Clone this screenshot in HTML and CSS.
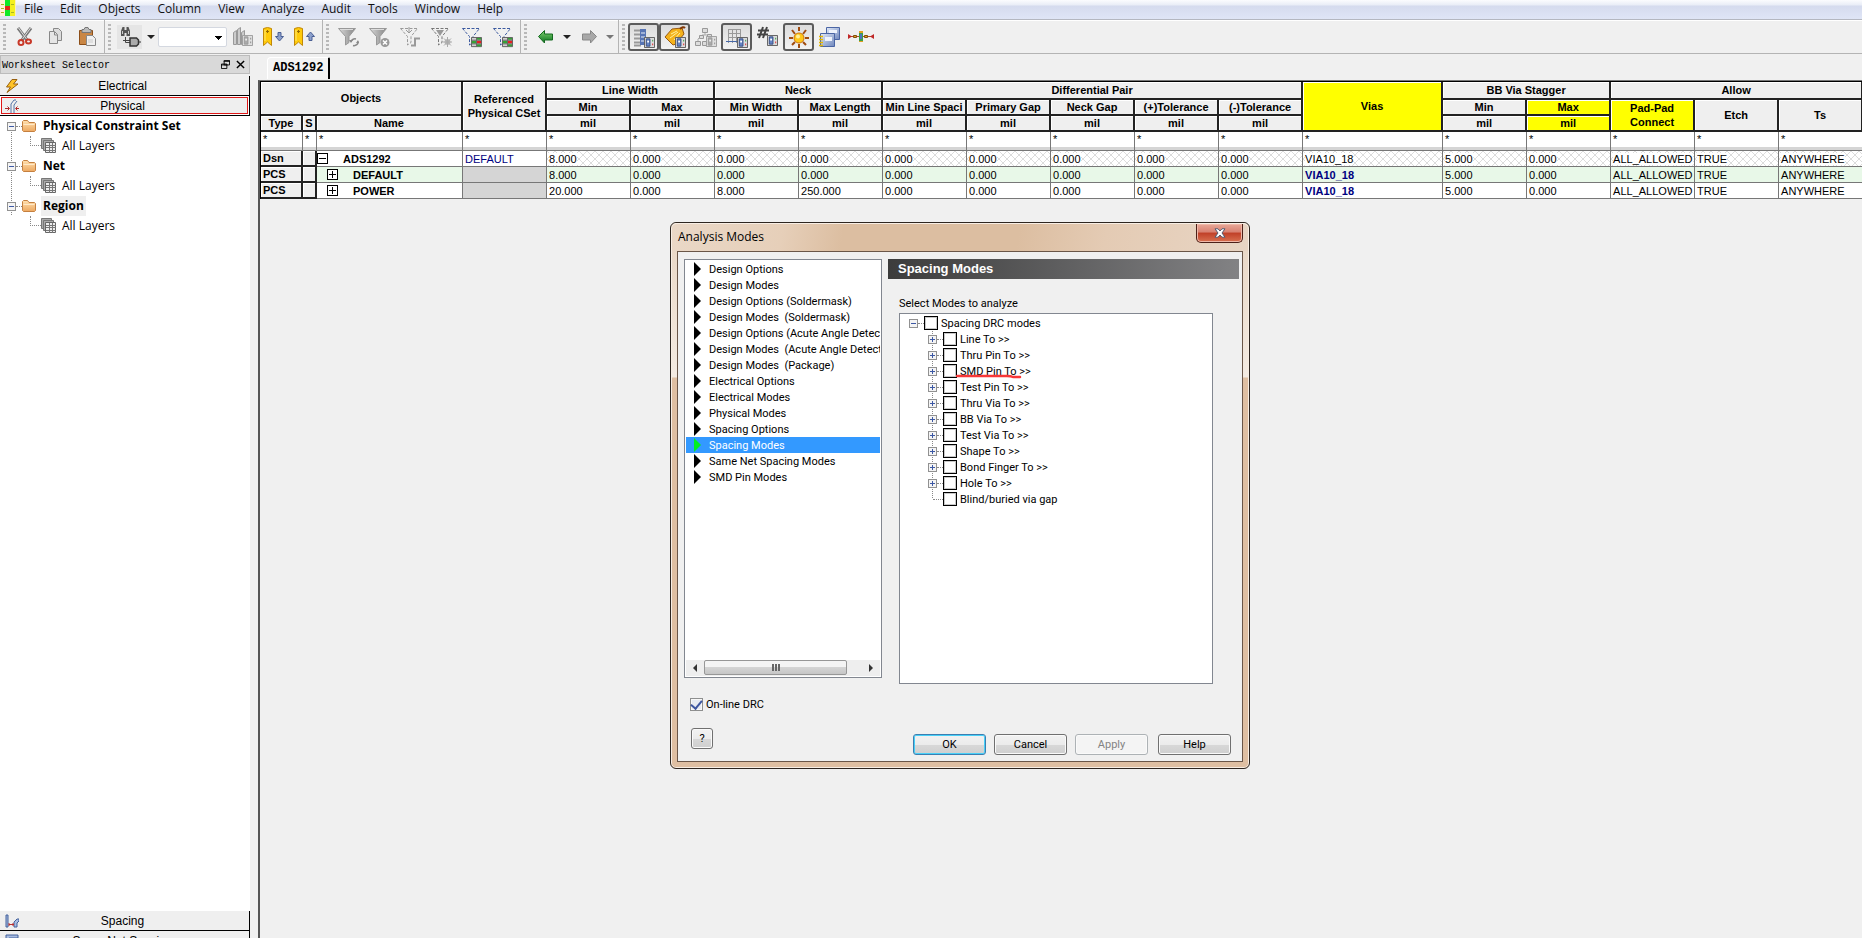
FILE: index.html
```html
<!DOCTYPE html>
<html lang="en">
<head>
    <meta charset="UTF-8">
    <meta name="viewport" content="width=device-width, initial-scale=1.0">
    <title>Constraint Manager</title>
    <link rel="stylesheet" href="styles.css">
</head>
<body>
    <!-- Shared icons -->
    <svg class="sprite" aria-hidden="true">
        <defs>
            <linearGradient id="gFunnel" x1="0" x2="1"><stop offset="0" stop-color="#d8d8d8"/><stop offset="1" stop-color="#868686"/></linearGradient>
            <linearGradient id="gFolder" x1="0" y1="0" x2="0" y2="1"><stop offset="0" stop-color="#ffe0b0"/><stop offset="1" stop-color="#eda860"/></linearGradient>
            <linearGradient id="gGreen" x1="0" y1="0" x2="0" y2="1"><stop offset="0" stop-color="#7fd070"/><stop offset="1" stop-color="#0c7420"/></linearGradient>
            <linearGradient id="gBlue" x1="0" y1="0" x2="1" y2="1"><stop offset="0" stop-color="#e2eaf8"/><stop offset="1" stop-color="#6f87bd"/></linearGradient>
        </defs>
        <symbol id="folder" viewBox="0 0 14 12">
            <path d="M.5 10.5v-9l1-1h4l1.500 2h5.500l1 1v7l-1 1h-11z" fill="url(#gFolder)" stroke="#c58040"/>
            <path d="M1.500 4.500h11" stroke="#ffe9c8"/>
        </symbol>
        <symbol id="layers" viewBox="0 0 16 16">
            <path d="M.5.5h10v10H.5z" fill="#aaa" stroke="#777"/>
            <path d="M2.500 2.500h10v10h-10z" fill="#aaa" stroke="#777"/>
            <path d="M4.500 4.500h10v10h-10z" fill="#eee" stroke="#666"/>
            <path d="M5 7.500h10M5 9.500h10M5 12.500h10M8.500 5v10M11.500 5v10" stroke="#777"/>
        </symbol>
        <symbol id="funnel" viewBox="0 0 22 22">
            <path d="M1.500 2.500h17l-6.500 8v6l-3.500 2.500v-8.500z" fill="url(#gFunnel)" stroke="#999"/>
            <path d="M3 3.500h13" stroke="#ddd"/>
        </symbol>
        <symbol id="funnel-dash" viewBox="0 0 22 22">
            <path d="M1.500 2.500h17l-6.500 8v6l-3.500 2.500v-8.500z" fill="none" stroke="currentColor" stroke-dasharray="3 1.500"/>
        </symbol>
        <symbol id="cellgrid" viewBox="0 0 12 12">
            <path d="M.5.5h11v10H.5z" fill="#d0d0d0" stroke="#555"/>
            <path d="M6 1h5v2H6zM1 4h5v3H1zM6 8h5v2H6z" fill="#35a035"/>
            <path d="M6 4h5v3H6z" fill="#e82020"/>
            <path d="M1 3.500h10M1 7.500h10M6 1v9" stroke="#666"/>
        </symbol>
        <symbol id="panel" viewBox="0 0 12 12">
            <path d="M.5.5h11v11H.5z" fill="#ddd" stroke="#555"/>
            <path d="M2.500 2h4v8h-4z" fill="#6584c4" stroke="#334a80"/>
            <path d="M3.500 4h2v2h-2z" fill="#fff"/>
            <path d="M9 3h1v2H9z" fill="#2c9a38"/><path d="M9 7h1v2H9z" fill="#e02020"/>
        </symbol>
        <symbol id="panel-off" viewBox="0 0 12 12">
            <path d="M.5.5h11v11H.5z" fill="#e0e0e0" stroke="#999"/>
            <path d="M2.500 2h4v8h-4z" fill="#aaa" stroke="#999"/>
            <path d="M3.500 4h2v2h-2z" fill="#eee"/><path d="M9 3h1v2H9zM9 7h1v2H9z" fill="#888"/>
        </symbol>
        <symbol id="bookmark" viewBox="0 0 10 20">
            <path d="M.5 1.500q4-2 8 0v17l-4-3.500-4 3.500z" fill="#ffca0a" stroke="#c08808"/>
            <path d="M4 3h1v3H4zM3 4h3v1H3z" fill="#966a00"/><path d="M2 3v11" stroke="#ffe870"/>
        </symbol>
    </svg>

    <nav class="menubar">
        <svg class="app-icon" viewBox="0 0 16 16" aria-hidden="true">
            <rect width="16" height="16" fill="#f8f0c0"/><rect width="5" height="16" fill="#fff0d8"/>
            <rect x="5" width="5" height="16" fill="#10e828"/><rect x="5" y="6" width="5" height="4" fill="#e02818"/>
            <rect x="10" width="5" height="16" fill="#f4f020"/><path d="M1 4.500h3M1 8.500h3M1 12.500h3M11 4.500h3M11 12.500h3" stroke="#a8b820"/>
        </svg>
        <a href="#file">File</a>
        <a href="#edit">Edit</a>
        <a href="#objects">Objects</a>
        <a href="#column">Column</a>
        <a href="#view">View</a>
        <a href="#analyze">Analyze</a>
        <a href="#audit">Audit</a>
        <a href="#tools">Tools</a>
        <a href="#window">Window</a>
        <a href="#help">Help</a>
    </nav>

    <div class="toolbar">
        <div class="tool-group">
            <span class="grip"></span>
            <button class="tool" aria-label="Cut"><svg viewBox="0 0 22 22">
                <path d="M4 2l9 12M17 2L8 14" stroke="#777" stroke-width="3"/><path d="M4.500 2l8 11M16.500 2l-8 11" stroke="#ddd"/>
                <ellipse cx="7" cy="16.500" rx="2.500" ry="2.500" fill="none" stroke="#c83828" stroke-width="2"/><ellipse cx="14.500" cy="15.500" rx="2.500" ry="2" fill="none" stroke="#c83828" stroke-width="2"/>
            </svg></button>
            <button class="tool" aria-label="Copy"><svg viewBox="0 0 22 22">
                <path d="M8.500 2.500h5l3 3v9h-8z" fill="#ddd" stroke="#888"/><path d="M4.500 5.500h5l3 3v9h-8z" fill="#e6e6e6" stroke="#888"/><path d="M9.500 6v3h3" fill="none" stroke="#888"/>
            </svg></button>
            <button class="tool" aria-label="Paste"><svg viewBox="0 0 22 22">
                <path d="M3.500 4.500h13v14h-13z" fill="#c98644" stroke="#8c4e18"/><path d="M6 3.500h2l1-2h3l1 2h2v3H6z" fill="#bbb" stroke="#777"/><path d="M10.500 9.500h6l3 3v7h-9z" fill="#f0f0f0" stroke="#888"/><path d="M12 14h5M12 16h5" stroke="#ccc"/>
            </svg></button>
        </div>
        <div class="tool-group">
            <span class="grip"></span>
            <button class="tool shaded" aria-label="Find"><svg viewBox="0 0 22 22">
                <path d="M2 10V5l1.500-4h2V10zM11 10V5L9.500 1h-2V10z" fill="#555"/><path d="M5 4h3v3H5z" fill="#555"/><path d="M3.500 5v3M9.500 5v3" stroke="#ccc"/>
                <path d="M6.500 11v5.500H11" fill="none" stroke="#444"/><path d="M4 14.500h7" stroke="#444"/>
                <path d="M11 12h6.500l2 2v4l-2 2H11z" fill="#aaa" stroke="#333" stroke-width="1.500"/><path d="M20 16h2" stroke="#333"/>
            </svg></button>
            <button class="drop" aria-label="Find options"></button>
            <select class="find-box" aria-label="Find text"><option></option></select>
            <button class="tool" aria-label="Find next"><svg viewBox="0 0 22 22">
                <path d="M1.500 6.500l3-2v14h-3zM5.500 3.500l3-2v17h-3zM9.500 6.500l3-2v14h-3z" fill="#ccc" stroke="#999"/><use href="#panel-off" x="10" y="9" width="11" height="11"/>
            </svg></button>
            <button class="tool" aria-label="Next bookmark"><svg viewBox="0 0 22 22">
                <use href="#bookmark" x="0" y="1" width="10" height="20"/><path d="M15 6.500h3v4h2.500l-4 4.500-4-4.500H15z" fill="#8ca0cc" stroke="#4a5f94"/>
            </svg></button>
            <button class="tool" aria-label="Previous bookmark"><svg viewBox="0 0 22 22">
                <use href="#bookmark" x="0" y="1" width="10" height="20"/><path d="M15 14.500h3v-4h2.500l-4-4.500-4 4.500H15z" fill="#8ca0cc" stroke="#4a5f94"/>
            </svg></button>
        </div>
        <div class="tool-group">
            <span class="grip"></span>
            <button class="tool" aria-label="Refresh filter"><svg viewBox="0 0 22 22"><use href="#funnel"/><path d="M14 16a4 3.500 0 0 1 5-3m2 2.500a4 3.500 0 0 1-5 4" fill="none" stroke="#888" stroke-width="1.500"/><path d="M12 14h4l-2 3zM22 17h-3l2-3z" fill="#888"/></svg></button>
            <button class="tool" aria-label="Clear filter"><svg viewBox="0 0 22 22"><use href="#funnel"/><circle cx="17" cy="16.500" r="4.500" fill="#999"/><path d="M15 14.500l4 4M19 14.500l-4 4" stroke="#fff" stroke-width="1.500"/></svg></button>
            <button class="tool" aria-label="Signal filter"><svg viewBox="0 0 22 22"><use href="#funnel-dash" color="#999"/><path d="M10 1v6M7 4l3 3 3-3" fill="none" stroke="#999"/><path d="M12 19.500h4v-7h5" fill="none" stroke="#999" stroke-width="2"/></svg></button>
            <button class="tool" aria-label="Custom filter"><svg viewBox="0 0 22 22"><use href="#funnel-dash" color="#777"/><path d="M6 4h8l-4 6z" fill="#999"/><circle cx="17.500" cy="16" r="3" fill="#bbb"/><path d="M17.500 11v10M12.500 16h10M14 12.500l7 7M21 12.500l-7 7" stroke="#aaa"/></svg></button>
            <button class="tool" aria-label="Filter rows"><svg viewBox="0 0 22 22"><use href="#funnel-dash" color="#3c5aa0"/><use href="#cellgrid" x="10" y="11" width="11" height="11"/></svg></button>
            <button class="tool" aria-label="Filter columns"><svg viewBox="0 0 22 22"><use href="#funnel-dash" color="#3c5aa0"/><use href="#cellgrid" x="10" y="11" width="11" height="11"/></svg></button>
        </div>
        <div class="tool-group">
            <span class="grip"></span>
            <button class="tool" aria-label="Back"><svg viewBox="0 0 22 22"><path d="M3.500 10.500l6-6v3.500h8v6h-8v3z" fill="url(#gGreen)" stroke="#156a20"/></svg></button>
            <button class="drop" aria-label="Back history"></button>
            <button class="tool" aria-label="Forward"><svg viewBox="0 0 22 22"><path d="M18.500 10.500l-6-6v3.500h-8v6h8v3z" fill="#a8a8a8" stroke="#888"/></svg></button>
            <button class="drop faded" aria-label="Forward history"></button>
        </div>
        <div class="tool-group">
            <span class="grip"></span>
            <button class="tool pressed" aria-label="Worksheet selector"><svg viewBox="0 0 22 22">
                <path d="M1 4.500h7M1 8.500h7M1 12.500h7M1 16.500h7M1 19.500h7" stroke="#999" stroke-width="2"/><path d="M7 3h6v16H7z" fill="#5774b4"/><path d="M8 7h4M8 11h4M8 15h4" stroke="#e8eef8"/><use href="#panel" x="11" y="11" width="11" height="11"/>
            </svg></button>
            <button class="tool pressed" aria-label="Tags"><svg viewBox="0 0 22 22">
                <path d="M1 11l7-8 10-1 2 6-8 10-3 1z" fill="#f4b21c" stroke="#9a5a10"/><path d="M7 8l6-3M6 12l8-6M10 14l6-7" stroke="#fff2a0"/><path d="M16 3q3-3 5-1" fill="none" stroke="#803808" stroke-width="2"/><use href="#panel" x="11" y="11" width="11" height="11"/>
            </svg></button>
            <button class="tool" aria-label="Hierarchy"><svg viewBox="0 0 22 22">
                <path d="M10 5v4M3 15v-2l4-4h6l4 4" fill="none" stroke="#aaa"/><path d="M7.500 2.500h5v4h-5zM4.500 9.500h4v3h-4zM.5 15.500h5v4h-5zM7.500 15.500h4v4h-4zM12.500 8.500h4v3h-4z" fill="#ddd" stroke="#999"/><use href="#panel-off" x="11" y="10" width="11" height="11"/>
            </svg></button>
            <button class="tool pressed" aria-label="Grid"><svg viewBox="0 0 22 22">
                <path d="M2.500 3v14M6.500 3v14M10.500 3v14M14.500 3v14M2 3.500h13M2 7.500h13M2 11.500h13" fill="none" stroke="#999"/><path d="M0 15.500h13" stroke="#4668a8"/><use href="#panel" x="11" y="11" width="11" height="11"/>
            </svg></button>
            <button class="tool" aria-label="Row numbers"><svg viewBox="0 0 22 22">
                <path d="M6 1L2 12M10 1L6 12M1 4.500h11M0 8.500h11" stroke="#444" stroke-width="2"/><use href="#panel" x="10" y="9" width="11" height="11"/>
            </svg></button>
            <button class="tool pressed" aria-label="Highlight"><svg viewBox="0 0 22 22">
                <path d="M11 1v4M11 18v4M1 12h4M17 12h4M4 4l3 4M18 4l-3 4M4 19l3-3M18 19l-3-3" stroke="#a04c10" stroke-width="2"/><circle cx="11" cy="12" r="5" fill="#ffc81c" stroke="#d07808"/><circle cx="10" cy="10.500" r="2" fill="#fff09a"/>
            </svg></button>
            <button class="tool" aria-label="Cascade windows"><svg viewBox="0 0 22 22">
                <path d="M7.500 1.500h13v12h-13z" fill="url(#gBlue)" stroke="#4a65a4"/><path d="M10 4h8v3h-8z" fill="#eef3fc"/><path d="M1.500 7.500h14v13h-14z" fill="url(#gBlue)" stroke="#4a65a4"/><path d="M6 11h7v4H6z" fill="#eef3fc"/><path d="M0 10.500h4M0 13.500h4M0 16.500h4M0 19.500h4" stroke="#e8b800" stroke-width="1.500"/>
            </svg></button>
            <button class="tool" aria-label="Net"><svg class="wide" viewBox="0 0 26 22">
                <path d="M1 10.500h24" stroke="#b04828"/><path d="M0 8l4 2.500L0 13zM26 8l-4 2.500 4 2.500z" fill="#c02828"/><path d="M5.500 9.500h3v2h-3zM16.500 9.500h3v2h-3z" fill="#e8a020" stroke="#805010"/><path d="M11 6h4v9h-4z" fill="#38a048"/><path d="M12 8h2v5h-2z" fill="#4c74c0"/><path d="M11 5h4v2h-4zM11 15h4v1h-4z" fill="#e0a020"/>
            </svg></button>
        </div>
    </div>

    <div class="workspace">
        <aside class="sidebar">
            <div class="pane-title">
                <span>Worksheet Selector</span>
                <button aria-label="Float"><svg viewBox="0 0 10 10"><path d="M3.500.5h6v5h-6zM.5 4.500h6v5h-6z" fill="#d9d9d9" stroke="#000"/><path d="M3 1.500h7M0 5.500h7" stroke="#000"/></svg></button>
                <button aria-label="Close pane"><svg viewBox="0 0 10 10"><path d="M1 1l8 8M9 1L1 9" stroke="#000" stroke-width="1.600"/></svg></button>
            </div>
            <button class="sheet-tab">
                <svg viewBox="0 0 14 14"><path d="M7 .5h5L8.500 5H13L2 13.500 5.500 8H1.500z" fill="#ffc428" stroke="#986010"/></svg>
                <span>Electrical</span>
            </button>
            <button class="sheet-tab active">
                <svg viewBox="0 0 14 14"><path d="M6 14V5l3-4h2M9 14V6l3-4" fill="none" stroke="#5274a8"/><path d="M0 9.500h4M14 9.500h-3M2.500 7.500l2 2-2 2M12.500 7.500l-2 2 2 2" fill="none" stroke="#b02828"/></svg>
                <span>Physical</span>
            </button>
            <ul class="sheet-tree">
                <li class="branch"><button class="toggle minus" aria-label="Collapse"></button><i class="dots"></i><svg><use href="#folder"/></svg><b>Physical Constraint Set</b></li>
                <li class="leaf"><i class="elbow"></i><svg><use href="#layers"/></svg><span>All Layers</span></li>
                <li class="branch"><button class="toggle minus" aria-label="Collapse"></button><i class="dots"></i><svg><use href="#folder"/></svg><b>Net</b></li>
                <li class="leaf"><i class="elbow"></i><svg><use href="#layers"/></svg><span>All Layers</span></li>
                <li class="branch"><button class="toggle minus" aria-label="Collapse"></button><i class="dots"></i><svg><use href="#folder"/></svg><b class="current">Region</b></li>
                <li class="leaf"><i class="elbow"></i><svg><use href="#layers"/></svg><span>All Layers</span></li>
            </ul>
            <div class="more-tabs">
                <button class="sheet-tab">
                    <svg viewBox="0 0 14 14"><path d="M1 1h2v12H1zM9 13V8l3-3h2v2l-2 2v4z" fill="#a8bce0" stroke="#42609c"/><path d="M4 10.500h5M4 9v3M8 9v3" stroke="#b83030"/></svg>
                    <span>Spacing</span>
                </button>
                <button class="sheet-tab">
                    <svg viewBox="0 0 14 14"><path d="M1 13V1h12v3H4v9z" fill="#a8bce0" stroke="#42609c"/><path d="M7 6h6v7H7z" fill="#a8bce0" stroke="#42609c"/></svg>
                    <span>Same Net Spacing</span>
                </button>
            </div>
        </aside>

        <main class="sheet">
            <button class="doc-tab">ADS1292</button>
            <div class="sheet-body">
                <table class="constraints">
                    <colgroup>
                        <col class="c-type"><col class="c-s"><col class="c-name"><col class="c-std">
                        <col class="c-std"><col class="c-std"><col class="c-std"><col class="c-std">
                        <col class="c-std"><col class="c-std"><col class="c-std"><col class="c-std"><col class="c-std">
                        <col class="c-vias">
                        <col class="c-std"><col class="c-std"><col class="c-std"><col class="c-std"><col class="c-std">
                    </colgroup>
                    <thead>
                        <tr class="head-top">
                            <th colspan="3" rowspan="2">Objects</th>
                            <th rowspan="3">Referenced Physical CSet</th>
                            <th colspan="2">Line Width</th>
                            <th colspan="2">Neck</th>
                            <th colspan="5">Differential Pair</th>
                            <th rowspan="3" class="mark">Vias</th>
                            <th colspan="2">BB Via Stagger</th>
                            <th colspan="3">Allow</th>
                        </tr>
                        <tr>
                            <th>Min</th><th>Max</th>
                            <th>Min Width</th><th>Max Length</th>
                            <th>Min Line Spaci</th><th>Primary Gap</th><th>Neck Gap</th><th>(+)Tolerance</th><th>(-)Tolerance</th>
                            <th>Min</th><th class="mark">Max</th>
                            <th rowspan="2" class="mark">Pad-Pad Connect</th><th rowspan="2">Etch</th><th rowspan="2">Ts</th>
                        </tr>
                        <tr>
                            <th>Type</th><th>S</th><th>Name</th>
                            <th>mil</th><th>mil</th><th>mil</th><th>mil</th>
                            <th>mil</th><th>mil</th><th>mil</th><th>mil</th><th>mil</th>
                            <th>mil</th><th class="mark">mil</th>
                        </tr>
                    </thead>
                    <tbody>
                        <tr class="filters">
                            <td>*</td><td>*</td><td>*</td><td>*</td><td>*</td><td>*</td><td>*</td><td>*</td><td>*</td><td>*</td>
                            <td>*</td><td>*</td><td>*</td><td>*</td><td>*</td><td>*</td><td>*</td><td>*</td><td>*</td>
                        </tr>
                        <tr class="design">
                            <th>Dsn</th><th></th>
                            <td class="name"><div><button class="expand minus" aria-label="Collapse"></button>ADS1292</div></td>
                            <td class="cset">DEFAULT</td>
                            <td><span>8.000</span></td><td><span>0.000</span></td><td><span>0.000</span></td><td><span>0.000</span></td>
                            <td><span>0.000</span></td><td><span>0.000</span></td><td><span>0.000</span></td><td><span>0.000</span></td><td><span>0.000</span></td>
                            <td><span>VIA10_18</span></td>
                            <td><span>5.000</span></td><td><span>0.000</span></td><td><span>ALL_ALLOWED</span></td><td><span>TRUE</span></td><td><span>ANYWHERE</span></td>
                        </tr>
                        <tr class="default-set">
                            <th>PCS</th><th></th>
                            <td class="name child"><div><button class="expand" aria-label="Expand"></button>DEFAULT</div></td>
                            <td class="blank"></td>
                            <td>8.000</td><td>0.000</td><td>0.000</td><td>0.000</td>
                            <td>0.000</td><td>0.000</td><td>0.000</td><td>0.000</td><td>0.000</td>
                            <td class="via">VIA10_18</td>
                            <td>5.000</td><td>0.000</td><td>ALL_ALLOWED</td><td>TRUE</td><td>ANYWHERE</td>
                        </tr>
                        <tr>
                            <th>PCS</th><th></th>
                            <td class="name child"><div><button class="expand" aria-label="Expand"></button>POWER</div></td>
                            <td class="blank"></td>
                            <td>20.000</td><td>0.000</td><td>8.000</td><td>250.000</td>
                            <td>0.000</td><td>0.000</td><td>0.000</td><td>0.000</td><td>0.000</td>
                            <td class="via">VIA10_18</td>
                            <td>5.000</td><td>0.000</td><td>ALL_ALLOWED</td><td>TRUE</td><td>ANYWHERE</td>
                        </tr>
                    </tbody>
                </table>
            </div>
        </main>
    </div>

    <!-- Analysis Modes window -->
    <section class="dialog" role="dialog" aria-labelledby="dialogTitle">
        <header class="dialog-title">
            <h2 id="dialogTitle">Analysis Modes</h2>
            <button class="close" aria-label="Close"><svg viewBox="0 0 12 10"><path d="M1 .8h3l2 2.200L8 .8h3L8 5l3 4.200H8L6 7 4 9.200H1L4 5z" fill="#fff" stroke="#555a70"/></svg></button>
        </header>
        <div class="dialog-body">
            <div class="columns">
                <div class="mode-list">
                    <ul>
                        <li>Design Options</li>
                        <li>Design Modes</li>
                        <li>Design Options (Soldermask)</li>
                        <li>Design Modes&nbsp; (Soldermask)</li>
                        <li>Design Options (Acute Angle Detect</li>
                        <li>Design Modes&nbsp; (Acute Angle Detect</li>
                        <li>Design Modes&nbsp; (Package)</li>
                        <li>Electrical Options</li>
                        <li>Electrical Modes</li>
                        <li>Physical Modes</li>
                        <li>Spacing Options</li>
                        <li class="selected">Spacing Modes</li>
                        <li>Same Net Spacing Modes</li>
                        <li>SMD Pin Modes</li>
                    </ul>
                    <div class="scrollbar">
                        <button class="scroll-left" aria-label="Scroll left"></button>
                        <div class="thumb"><i></i><i></i><i></i></div>
                        <button class="scroll-right" aria-label="Scroll right"></button>
                    </div>
                </div>
                <div class="mode-panel">
                    <h3>Spacing Modes</h3>
                    <p>Select Modes to analyze</p>
                    <ul class="mode-tree">
                        <li class="root"><button class="toggle minus" aria-label="Collapse"></button><i class="dots"></i><label><input type="checkbox">Spacing DRC modes</label></li>
                        <li><button class="toggle" aria-label="Expand"></button><i class="dots"></i><label><input type="checkbox">Line To &gt;&gt;</label></li>
                        <li><button class="toggle" aria-label="Expand"></button><i class="dots"></i><label><input type="checkbox">Thru Pin To &gt;&gt;</label></li>
                        <li><button class="toggle" aria-label="Expand"></button><i class="dots"></i><label><input type="checkbox">SMD Pin To &gt;&gt;</label>
                            <svg class="red-line" viewBox="0 0 66 5" aria-hidden="true"><path d="M1 2h50q4 0 6 1h7" fill="none" stroke="#f83838" stroke-width="2.500" stroke-linecap="round"/></svg></li>
                        <li><button class="toggle" aria-label="Expand"></button><i class="dots"></i><label><input type="checkbox">Test Pin To &gt;&gt;</label></li>
                        <li><button class="toggle" aria-label="Expand"></button><i class="dots"></i><label><input type="checkbox">Thru Via To &gt;&gt;</label></li>
                        <li><button class="toggle" aria-label="Expand"></button><i class="dots"></i><label><input type="checkbox">BB Via To &gt;&gt;</label></li>
                        <li><button class="toggle" aria-label="Expand"></button><i class="dots"></i><label><input type="checkbox">Test Via To &gt;&gt;</label></li>
                        <li><button class="toggle" aria-label="Expand"></button><i class="dots"></i><label><input type="checkbox">Shape To &gt;&gt;</label></li>
                        <li><button class="toggle" aria-label="Expand"></button><i class="dots"></i><label><input type="checkbox">Bond Finger To &gt;&gt;</label></li>
                        <li><button class="toggle" aria-label="Expand"></button><i class="dots"></i><label><input type="checkbox">Hole To &gt;&gt;</label></li>
                        <li class="last"><i class="dots long"></i><label><input type="checkbox">Blind/buried via gap</label></li>
                    </ul>
                </div>
            </div>
            <label class="online"><input type="checkbox" checked>On-line DRC</label>
            <footer class="dialog-actions">
                <button class="ask">?</button>
                <button class="action primary">OK</button>
                <button class="action">Cancel</button>
                <button class="action" disabled>Apply</button>
                <button class="action help">Help</button>
            </footer>
        </div>
    </section>
</body>
</html>
```

FILE: styles.css
```css
* {
    box-sizing: border-box;
}
body {
    margin: 0;
    height: 100vh;
    display: flex;
    flex-direction: column;
    overflow: hidden;
    position: relative;
    background-color: #f0f0f0;
    color: #000;
    font-family: "Liberation Sans", Arial, sans-serif;
    font-size: 11px;
}
button {
    font: inherit;
    color: inherit;
    padding: 0;
    border: none;
    background: none;
}
ul {
    list-style: none;
    margin: 0;
    padding: 0;
}
.sprite {
    position: absolute;
    width: 0;
    height: 0;
}

/* Menu bar */
.menubar {
    flex: none;
    height: 19px;
    display: flex;
    gap: 17px;
    padding-bottom: 3px;
    align-items: center;
    background: linear-gradient(#fbfcfe 0, #e9edf7 5px, #d5dbee 6px, #dfe5f6 100%);
    font-family: "Open Sans", "Noto Sans", sans-serif;
    font-size: 12px;
}
.menubar a {
    color: #111;
    text-decoration: none;
    line-height: 15px;
}
.app-icon {
    width: 16px;
    height: 16px;
    margin-right: -9px;
}

/* Toolbar */
.toolbar {
    flex: none;
    height: 35px;
    display: flex;
    align-items: stretch;
    border-top: 1px solid #b4b7c0;
    border-bottom: 1px solid #b4b4b4;
    box-shadow: inset 0 1px #fff;
}
.tool-group {
    display: flex;
    align-items: center;
    padding-right: 2px;
    border-right: 1px solid #b4b4b4;
}
.tool-group:last-child {
    border-right: none;
}
.grip {
    width: 3px;
    height: 26px;
    margin: 0 3px;
    background: repeating-linear-gradient(#b8b8b8 0, #b8b8b8 2px, #efefef 2px, #efefef 4px);
}
.tool {
    width: 31px;
    height: 28px;
    display: flex;
    align-items: center;
    justify-content: center;
    border-radius: 3px;
}
.tool svg {
    flex: none;
    width: 22px;
    height: 22px;
}
.tool svg.wide {
    width: 26px;
}
.tool.shaded {
    background-color: #e5e5e5;
    background-clip: content-box;
    padding: 2px 3px;
}
.tool.pressed {
    border: 2px solid #5c5c5c;
    background: linear-gradient(#dcdcdc, #f2f2f2);
}
.drop {
    width: 12px;
    height: 24px;
    display: flex;
    align-items: center;
    justify-content: center;
}
.drop::before {
    content: "";
    border: 4px solid transparent;
    border-top-color: #222;
    border-bottom: none;
}
.drop.faded::before {
    border-top-color: #777;
}
.find-box {
    width: 69px;
    height: 20px;
    margin-left: 1px;
    appearance: none;
    border: 1px solid #d4d8e0;
    border-radius: 2px;
    background: linear-gradient(135deg, #000 50%, transparent 50%) 60px 8px / 4px 4px no-repeat,
        linear-gradient(225deg, #000 50%, transparent 50%) 56px 8px / 4px 4px no-repeat, #fff;
}

/* Sidebar */
.workspace {
    flex: 1;
    min-height: 0;
    display: flex;
    gap: 8px;
    padding-top: 1px;
}
.sidebar {
    flex: none;
    width: 250px;
    display: flex;
    flex-direction: column;
}
.pane-title {
    height: 19px;
    margin-bottom: 2px;
    padding: 0 4px 0 1px;
    display: flex;
    align-items: center;
    gap: 6px;
    background-color: #d9d9d9;
    border: 1px solid #bcbcbc;
    font-family: "Liberation Mono", monospace;
    font-size: 10px;
}
.pane-title span {
    flex: 1;
    padding-top: 2px;
}
.pane-title svg {
    display: block;
    width: 9px;
    height: 9px;
}
.sheet-tab {
    flex: none;
    height: 20px;
    padding: 0 5px;
    display: flex;
    align-items: center;
    background-color: #efefef;
    border-right: 1px solid #000;
    border-bottom: 1px solid #000;
    font-size: 12px;
}
.sheet-tab svg {
    width: 14px;
    height: 14px;
}
.sheet-tab span {
    flex: 1;
    padding-right: 18px;
    text-align: center;
}
.sheet-tab.active {
    box-shadow: inset 0 0 0 1px #fff, inset 0 0 0 2px #e01818;
}
.sheet-tree {
    flex: 1;
    background-color: #fff;
    padding-left: 7px;
    font-family: "Open Sans", "Noto Sans", sans-serif;
    font-size: 12px;
}
.sheet-tree li {
    height: 20px;
    display: flex;
    align-items: center;
    background: repeating-linear-gradient(#888 0, #888 1px, #fff 1px, #fff 2px) 4px 0 / 1px 100% no-repeat;
}
.sheet-tree li:first-child {
    background-position: 4px 10px;
}
.sheet-tree li:last-child {
    background: none;
}
.branch svg {
    width: 14px;
    height: 12px;
    margin-right: 5px;
}
.branch b {
    padding: 0 2px;
    line-height: 20px;
}
.branch .current {
    background-color: #efefef;
}
.leaf svg {
    width: 16px;
    height: 16px;
    margin-right: 5px;
}
.leaf span {
    padding-bottom: 2px;
}
.elbow {
    width: 11px;
    height: 10px;
    margin: 0 0 10px 23px;
    border-left: 1px dotted #888;
    border-bottom: 1px dotted #888;
}
.more-tabs {
    height: 27px;
    overflow: hidden;
}
.more-tabs .sheet-tab {
    width: 100%;
}

/* Tree toggles */
.toggle {
    flex: none;
    width: 9px;
    height: 9px;
    border: 1px solid #919191;
    background: linear-gradient(#3c58a4, #3c58a4) center / 5px 1px no-repeat,
        linear-gradient(#3c58a4, #3c58a4) center / 1px 5px no-repeat, #f4f4f4;
}
.toggle.minus {
    background: linear-gradient(#3c58a4, #3c58a4) center / 5px 1px no-repeat, #f4f4f4;
}
.dots {
    flex: none;
    width: 6px;
    border-top: 1px dotted #888;
}

/* Worksheet */
.sheet {
    flex: 1;
    min-width: 0;
    display: flex;
    flex-direction: column;
    align-items: flex-start;
}
.doc-tab {
    height: 22px;
    margin: 2px 0 0 9px;
    padding: 0 5px 2px;
    background-color: #f3f3f3;
    border-left: 1px solid #fff;
    border-top: 1px solid #fff;
    border-right: 2px solid #000;
    border-radius: 4px 2px 0 0;
    font-family: "Liberation Mono", monospace;
    font-size: 12px;
    font-weight: bold;
}
.sheet-body {
    flex: 1;
    width: 100%;
    margin-top: 1px;
    border-left: 2px solid #555;
    border-top: 1px solid #777;
}
.constraints {
    width: 100%;
    table-layout: fixed;
    border-collapse: separate;
    border-spacing: 0;
    border-left: 1px solid #000;
    border-top: 1px solid #000;
}
.c-type {
    width: 42px;
}
.c-s {
    width: 14px;
}
.c-name {
    width: 146px;
}
.c-std {
    width: 84px;
}
.c-vias {
    width: 140px;
}
.constraints th,
.constraints td {
    height: 16px;
    padding: 0 2px;
    overflow: hidden;
    white-space: nowrap;
    line-height: 14px;
}
.constraints th {
    background-color: #efefef;
    border-right: 2px solid #222;
    border-bottom: 2px solid #222;
    box-shadow: inset 1px 1px #fff;
}
.constraints thead th {
    padding: 0;
}
.constraints thead th[rowspan] {
    white-space: normal;
}
.constraints .head-top th {
    height: 18px;
}
.constraints .mark {
    background-color: #ff0;
}
.constraints td {
    background-color: #fff;
    border-right: 1px solid #777;
    border-bottom: 1px solid #777;
}
.constraints tbody th {
    text-align: left;
    padding: 0 2px;
}
.constraints .filters td {
    height: 19px;
    vertical-align: top;
    line-height: 15px;
    box-shadow: inset 0 -3px #d5d5d5;
}
.constraints .design td {
    background: linear-gradient(45deg, transparent 45%, #dcdcdc 45%, #dcdcdc 55%, transparent 55%) 0 0 / 8px 8px,
        linear-gradient(-45deg, transparent 45%, #dcdcdc 45%, #dcdcdc 55%, transparent 55%) 0 0 / 8px 8px, #fff;
}
.design span {
    background-color: #fff;
}
.constraints .design .name,
.constraints .design .cset {
    background: #fff;
}
.default-set td {
    background-color: #e8f8e8 !important;
}
.constraints .blank {
    background-color: #d5d5d5 !important;
}
.cset,
.via {
    color: #000080;
}
.via,
.name {
    font-weight: bold;
}
.name div {
    display: flex;
    align-items: center;
    gap: 15px;
}
.constraints .name {
    padding: 0;
}
.constraints .child {
    padding-left: 10px;
}
.expand {
    width: 11px;
    height: 11px;
    border: 1px solid #000;
    background: linear-gradient(#000, #000) center / 7px 1px no-repeat,
        linear-gradient(#000, #000) center / 1px 7px no-repeat, #fff;
}
.expand.minus {
    background: linear-gradient(#000, #000) center / 7px 1px no-repeat, #fff;
}

/* Dialog window */
.dialog {
    position: absolute;
    left: 670px;
    top: 222px;
    width: 580px;
    height: 547px;
    padding: 0 6px 6px;
    display: flex;
    flex-direction: column;
    border: 1px solid #2e2620;
    border-radius: 6px;
    background: linear-gradient(#e8d5c2, #f4ebe2 154px, #dfbfa2 155px);
    box-shadow: inset 0 0 0 1px #f8eee4;
    font-family: Roboto, "Liberation Sans", sans-serif;
}
.dialog-title {
    flex: none;
    height: 28px;
    margin: 0 -5px;
    padding-left: 6px;
    display: flex;
    align-items: center;
    justify-content: space-between;
    border-top: 1px solid #f8eee4;
    border-radius: 5px 5px 0 0;
    background: linear-gradient(100deg, #ead8c7 0, #e6cfb9 110px, #dcbea1 170px, #dcbea1 60%, #e4cbb4 75%, #e8d5c4 100%);
}
.dialog-title h2 {
    margin: 0;
    padding-bottom: 2px;
    font-family: "Open Sans", "Noto Sans", sans-serif;
    font-size: 12px;
    font-weight: normal;
}
.close {
    align-self: flex-start;
    width: 47px;
    height: 19px;
    margin-right: 5px;
    display: flex;
    align-items: center;
    justify-content: center;
    border: 1px solid #4c2018;
    border-top: none;
    border-radius: 0 0 5px 5px;
    background: linear-gradient(#e8a898, #d88070 45%, #c04028 50%, #d87050);
    box-shadow: inset 0 0 0 1px #f0b8a8;
}
.close svg {
    width: 12px;
    height: 10px;
}
.dialog-body {
    flex: 1;
    min-height: 0;
    padding: 7px 3px 6px 6px;
    display: flex;
    flex-direction: column;
    border: 1px solid #6a5648;
    background-color: #f0f0f0;
}
.columns {
    display: flex;
    gap: 6px;
    align-items: flex-start;
}
.mode-list {
    flex: none;
    width: 198px;
    height: 419px;
    padding: 1px;
    display: flex;
    flex-direction: column;
    border: 1px solid #828790;
    background-color: #fff;
}
.mode-list ul {
    flex: 1;
}
.mode-list li {
    height: 16px;
    padding-left: 8px;
    display: flex;
    align-items: center;
    overflow: hidden;
    white-space: nowrap;
}
.mode-list li::before {
    content: "";
    margin-right: 8px;
    border: 7px solid transparent;
    border-left-color: #000;
    border-right: none;
}
.mode-list .selected {
    background-color: #3399ff;
    color: #fff;
}
.mode-list .selected::before {
    border-left-color: #00f020;
}
.scrollbar {
    height: 16px;
    display: flex;
    background-color: #eee;
}
.scrollbar button {
    width: 18px;
    display: flex;
    align-items: center;
    justify-content: center;
}
.scroll-right {
    margin-left: auto;
}
.scrollbar button::before {
    content: "";
    border: 4px solid transparent;
}
.scroll-left::before {
    border-right-color: #333 !important;
    border-left: none !important;
}
.scroll-right::before {
    border-left-color: #333 !important;
    border-right: none !important;
}
.thumb {
    width: 143px;
    height: 15px;
    display: flex;
    gap: 1px;
    align-items: center;
    justify-content: center;
    border: 1px solid #979797;
    border-radius: 2px;
    background: linear-gradient(#f4f4f4 45%, #d4d4d4 50%, #c6c6c6);
}
.thumb i {
    width: 2px;
    height: 7px;
    background-color: #666;
}
.mode-panel {
    flex: 1;
}
.mode-panel h3 {
    margin: 0 0 17px;
    padding-left: 10px;
    background: linear-gradient(90deg, #3c3c3c, #828284);
    color: #fff;
    font-family: "Liberation Sans", Arial, sans-serif;
    font-size: 13px;
    line-height: 20px;
}
.mode-panel p {
    margin: 0 0 1px 11px;
    line-height: 16px;
}
.mode-tree {
    height: 371px;
    margin: 0 26px 0 11px;
    padding: 1px 0 0 9px;
    border: 1px solid #828790;
    background-color: #fff;
}
.mode-tree li {
    position: relative;
    height: 16px;
    padding-left: 19px;
    display: flex;
    align-items: center;
    background: repeating-linear-gradient(#888 0, #888 1px, #fff 1px, #fff 2px) 23px 0 / 1px 100% no-repeat;
}
.mode-tree .root {
    padding-left: 0;
    background: none;
}
.mode-tree .last {
    padding-left: 24px;
    background-size: 1px 50%;
}
.mode-tree .long {
    width: 10px;
}
.mode-tree label,
.online {
    display: flex;
    align-items: center;
    gap: 3px;
}
.mode-tree input {
    appearance: none;
    width: 14px;
    height: 14px;
    margin: 0;
    border: 1px solid #000;
    background-color: #fff;
    box-shadow: inset 0 0 0 1px #c8c8c8;
}
.red-line {
    position: absolute;
    left: 47px;
    top: 11px;
    width: 66px;
    height: 5px;
}
.online {
    margin: 13px 0 0 6px;
    height: 14px;
    align-self: flex-start;
}
.online input {
    appearance: none;
    width: 13px;
    height: 13px;
    margin: 0;
    display: flex;
    align-items: center;
    justify-content: center;
    border: 1px solid #8e8f8f;
    background-color: #e6eaf2;
    box-shadow: inset 0 0 0 1px #f8f8f8;
}
.online input::before {
    content: "";
    width: 5px;
    height: 9px;
    margin-bottom: 2px;
    border-right: 2px solid #3c55a0;
    border-bottom: 2px solid #3c55a0;
    transform: rotate(40deg);
}
.dialog-actions {
    margin-top: auto;
    padding: 0 8px 0 7px;
    display: flex;
    align-items: flex-end;
    gap: 8px;
}
.dialog-actions button {
    height: 21px;
    border: 1px solid #707070;
    border-radius: 3px;
    background: linear-gradient(#f2f2f2, #ebebeb 50%, #d8d8d8 50%, #cfcfcf);
    box-shadow: inset 0 0 0 1px #fafafa;
}
.action {
    width: 73px;
}
.action.help {
    margin-left: 2px;
}
.dialog-actions .ask {
    width: 22px;
    margin: 0 auto 6px 0;
}
.dialog-actions .primary {
    border-color: #3c7fb1;
    box-shadow: inset 0 0 0 1px #48d0f8;
}
.dialog-actions button:disabled {
    border-color: #adb2b5;
    background: #f4f4f4;
    color: #838383;
}
```
